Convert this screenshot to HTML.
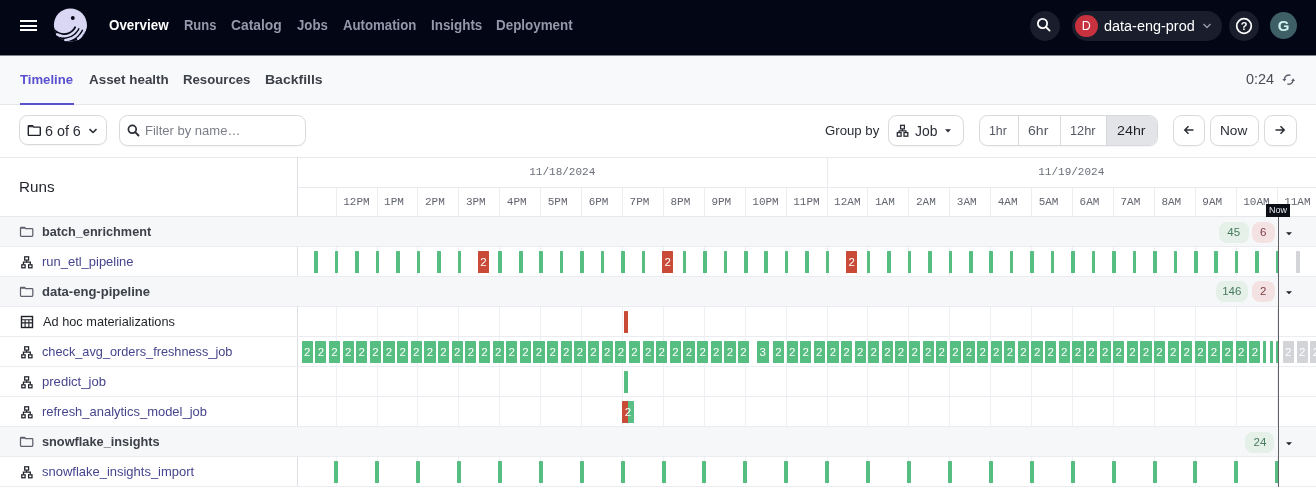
<!DOCTYPE html><html><head><meta charset="utf-8"><style>
*{margin:0;padding:0;box-sizing:border-box}
html,body{width:1316px;height:503px;overflow:hidden;background:#fff;font-family:"Liberation Sans",sans-serif;position:relative}
.a{position:absolute}
.nav{left:0;top:0;width:1316px;height:55px;background:#030615}
.nl{top:-2.5px;height:55px;line-height:55px;font-size:14px;letter-spacing:-0.35px;font-weight:700;color:#9598AA;white-space:nowrap}
.tabs{left:0;top:55px;width:1316px;height:50px;background:#F8F9FB;border-bottom:1px solid #E6E8EC}
.tb{top:55px;height:49px;line-height:49px;font-size:13px;font-weight:700;color:#3D4049;white-space:nowrap}
.btn{border:1px solid #D7D9DD;border-radius:8.5px;background:#fff;box-shadow:0 1px 1px rgba(0,0,0,0.04)}
.t{white-space:nowrap}
.mono{font-family:"Liberation Mono",monospace}
.row{left:0;width:1316px;height:30px;border-bottom:1px solid #EBECEF}
.grp{background:#F6F7F9}
.rn{left:42px;margin-top:-0.5px;height:30px;line-height:30px;font-size:12.75px;white-space:nowrap}
.gn{left:42px;height:30px;line-height:31px;font-size:12.5px;font-weight:700;color:#3D4049;white-space:nowrap}
.g{background:#57BE82}
.r{background:#C94B37}
.gy{background:#D2D4D8}
.bx{color:#fff;font-size:11.5px;text-align:center;line-height:22px;height:22px;border-radius:0.6px}
.pill{height:21px;line-height:21px;border-radius:8px;font-size:11.5px;text-align:center}
</style></head><body><div id="root" class="a" style="left:0;top:0;width:1316px;height:503px;overflow:hidden;will-change:transform;background:#fff"><div class="a nav"></div>
<div class="a" style="left:20px;top:19.5px;width:17px;height:2px;background:#fff"></div>
<div class="a" style="left:20px;top:24.5px;width:17px;height:2px;background:#fff"></div>
<div class="a" style="left:20px;top:29px;width:17px;height:2px;background:#fff"></div>
<svg class="a" style="left:52px;top:7px" width="38" height="38" viewBox="0 0 38 38">
<defs><clipPath id="lc"><circle cx="18.4" cy="18" r="16.5"/></clipPath></defs>
<g clip-path="url(#lc)">
<rect x="0" y="0" width="38" height="38" fill="#D9D7F3"/>
<path d="M35.75 25.08 A26 26 0 1 1 -11.56 3.51" stroke="#030615" stroke-width="28.6" fill="none"/>
<path d="M26.17 18.03 A14.6 14.6 0 0 1 6.53 28.04" stroke="#D9D7F3" stroke-width="2.5" fill="none"/>
<path d="M30.10 18.35 A18.5 18.5 0 0 1 15.21 32.72" stroke="#D9D7F3" stroke-width="2.5" fill="none"/>
<path d="M34.08 17.60 A22.3 22.3 0 0 1 27.77 30.27" stroke="#D9D7F3" stroke-width="2.5" fill="none"/>
</g>
<path d="M9.46 28.88 A14.6 14.6 0 0 1 5.15 27.39" stroke="#D9D7F3" stroke-width="2.5" fill="none" stroke-linecap="round"/>
<path d="M18.33 31.88 A18.5 18.5 0 0 1 13.29 32.95" stroke="#D9D7F3" stroke-width="2.5" fill="none" stroke-linecap="round"/>
<path d="M29.08 28.83 A22.3 22.3 0 0 1 26.03 31.83" stroke="#D9D7F3" stroke-width="2.5" fill="none" stroke-linecap="round"/>
<circle cx="20.8" cy="11" r="1.9" fill="#030615"/>
</svg>
<div class="a t" style="left:109.42px;top:-2.5px;height:55px;line-height:55px;font-size:14px;font-weight:700;transform:scaleX(0.9571);transform-origin:0 0;color:#fff">Overview</div>
<div class="a t" style="left:183.87px;top:-2.5px;height:55px;line-height:55px;font-size:14px;font-weight:700;transform:scaleX(0.9254);transform-origin:0 0;color:#9598AA">Runs</div>
<div class="a t" style="left:231.01px;top:-2.5px;height:55px;line-height:55px;font-size:14px;font-weight:700;transform:scaleX(0.9860);transform-origin:0 0;color:#9598AA">Catalog</div>
<div class="a t" style="left:297.06px;top:-2.5px;height:55px;line-height:55px;font-size:14px;font-weight:700;transform:scaleX(0.9417);transform-origin:0 0;color:#9598AA">Jobs</div>
<div class="a t" style="left:343.36px;top:-2.5px;height:55px;line-height:55px;font-size:14px;font-weight:700;transform:scaleX(0.9433);transform-origin:0 0;color:#9598AA">Automation</div>
<div class="a t" style="left:430.84px;top:-2.5px;height:55px;line-height:55px;font-size:14px;font-weight:700;transform:scaleX(0.9558);transform-origin:0 0;color:#9598AA">Insights</div>
<div class="a t" style="left:496.44px;top:-2.5px;height:55px;line-height:55px;font-size:14px;font-weight:700;transform:scaleX(0.9570);transform-origin:0 0;color:#9598AA">Deployment</div>
<div class="a" style="left:1029.5px;top:11px;width:30px;height:30px;border-radius:50%;background:#1A1D2B"></div>
<svg class="a" style="left:1035.2px;top:16.2px" width="18" height="18" viewBox="0 0 18 18"><circle cx="7.5" cy="7.5" r="4.6" stroke="#fff" stroke-width="1.8" fill="none"/><path d="M11 11 L14.6 14.6" stroke="#fff" stroke-width="1.8" stroke-linecap="round"/></svg>
<div class="a" style="left:1072px;top:11px;width:149.5px;height:30px;border-radius:15px;background:#1A1D2B"></div>
<div class="a" style="left:1075px;top:14.5px;width:22.5px;height:22.5px;border-radius:50%;background:#C8323F;color:#fff;font-size:12.5px;line-height:22.5px;text-align:center">D</div>
<div class="a t" style="left:1104.48px;top:11px;height:30px;line-height:30px;font-size:14px;transform:scaleX(1.0312);transform-origin:0 0;color:#fff">data-eng-prod</div>
<svg class="a" style="left:1202px;top:22px" width="10" height="8" viewBox="0 0 10 8"><path d="M1.5 2 L5 5.5 L8.5 2" stroke="#9A9DAE" stroke-width="1.3" fill="none"/></svg>
<div class="a" style="left:1229px;top:11px;width:30px;height:30px;border-radius:50%;background:#1A1D2B"></div>
<svg class="a" style="left:1235px;top:17px" width="18" height="18" viewBox="0 0 18 18"><circle cx="9" cy="9" r="7.3" stroke="#fff" stroke-width="1.7" fill="none"/><text x="9" y="13" text-anchor="middle" font-family="Liberation Sans" font-weight="700" font-size="11" fill="#fff">?</text></svg>
<div class="a" style="left:1270px;top:11.8px;width:27px;height:27px;border-radius:50%;background:#3D5F65;color:#D4F2F2;font-size:15px;font-weight:700;line-height:27px;text-align:center">G</div>
<div class="a tabs"></div>
<div class="a" style="left:0;top:55px;width:1316px;height:1px;background:#80828C"></div>
<div class="a t" style="left:20.06px;top:55px;height:49px;line-height:49px;font-size:13.5px;font-weight:700;transform:scaleX(0.9730);transform-origin:0 0;color:#5A51CF">Timeline</div>
<div class="a t" style="left:88.55px;top:55px;height:49px;line-height:49px;font-size:13.5px;font-weight:700;transform:scaleX(0.9931);transform-origin:0 0;color:#3D4049">Asset health</div>
<div class="a t" style="left:183.02px;top:55px;height:49px;line-height:49px;font-size:13.5px;font-weight:700;transform:scaleX(0.9763);transform-origin:0 0;color:#3D4049">Resources</div>
<div class="a t" style="left:264.96px;top:55px;height:49px;line-height:49px;font-size:13.5px;font-weight:700;transform:scaleX(1.0370);transform-origin:0 0;color:#3D4049">Backfills</div>
<div class="a" style="left:19.5px;top:102.5px;width:54px;height:2px;background:#5A51CF"></div>
<div class="a t" style="left:1246.08px;top:55px;height:49px;line-height:49px;font-size:14px;transform:scaleX(1.0324);transform-origin:0 0;color:#4A4D57">0:24</div>
<svg class="a" style="left:1280px;top:71px" width="18" height="18" viewBox="0 0 18 18"><path d="M4.4 8.2 A4.5 4.5 0 0 1 10.6 4.4" stroke="#5F626C" stroke-width="1.5" fill="none"/><path d="M7.3 12.9 A4.5 4.5 0 0 0 13.1 9.6" stroke="#5F626C" stroke-width="1.5" fill="none"/><path d="M2.3 8 L6.4 8 L4.3 10.6 Z" fill="#5F626C"/><path d="M11.1 9.9 L15.1 9.9 L13.2 7.2 Z" fill="#5F626C"/></svg>
<div class="a" style="left:0;top:157px;width:1316px;height:1px;background:#E9EAEE"></div>
<div class="a btn" style="left:19.3px;top:115.2px;width:87.7px;height:30.3px"></div>
<svg class="a" style="left:27px;top:124px" width="15" height="14" viewBox="0 0 15 14"><path d="M2 1.8 H5.6 L6.8 3.1 H12.6 Q13.3 3.1 13.3 3.8 V10.7 Q13.3 11.4 12.6 11.4 H2 Q1.3 11.4 1.3 10.7 V2.5 Q1.3 1.8 2 1.8 Z" stroke="#1F2229" stroke-width="1.4" fill="none" stroke-linejoin="round"/><path d="M1.6 2.2 H5.4 L6.4 3.3 H1.6 Z" fill="#1F2229"/></svg>
<div class="a t" style="left:45.23px;top:115.5px;height:30px;line-height:30px;font-size:14px;transform:scaleX(1.0222);transform-origin:0 0;color:#2A2D35">6 of 6</div>
<svg class="a" style="left:87px;top:126px" width="12" height="10" viewBox="0 0 12 10"><path d="M2.5 3.2 L6 6.5 L9.5 3.2" stroke="#2A2D35" stroke-width="1.6" fill="none"/></svg>
<div class="a btn" style="left:119px;top:115.2px;width:187px;height:30.4px"></div>
<svg class="a" style="left:126px;top:123px" width="15" height="15" viewBox="0 0 15 15"><circle cx="6.3" cy="6.3" r="3.9" stroke="#2A2D35" stroke-width="1.7" fill="none"/><path d="M9.2 9.2 L12.5 12.5" stroke="#2A2D35" stroke-width="1.9" stroke-linecap="round"/></svg>
<div class="a t" style="left:144.70px;top:115.5px;height:30px;line-height:30px;font-size:13px;transform:scaleX(1.0005);transform-origin:0 0;color:#7B7E88">Filter by name…</div>
<div class="a t" style="left:825.14px;top:115.5px;height:30px;line-height:30px;font-size:13px;transform:scaleX(1.0142);transform-origin:0 0;color:#2A2D35">Group by</div>
<div class="a btn" style="left:888px;top:115.2px;width:75.5px;height:30.4px"></div>
<svg class="a" style="left:896px;top:124px" width="14" height="14" viewBox="0 0 14 14"><rect x="4.6" y="1.3" width="3.8" height="3.6" stroke="#2A2D35" stroke-width="1.3" fill="none"/><rect x="1.3" y="8.6" width="3.8" height="3.6" stroke="#2A2D35" stroke-width="1.3" fill="none"/><rect x="8" y="8.6" width="3.8" height="3.6" stroke="#2A2D35" stroke-width="1.3" fill="none"/><path d="M6.5 5 V6.8 M3.2 8.6 V6.8 H9.9 V8.6" stroke="#2A2D35" stroke-width="1.3" fill="none"/></svg>
<div class="a t" style="left:914.75px;top:115.5px;height:30px;line-height:30px;font-size:14px;transform:scaleX(0.9931);transform-origin:0 0;color:#2A2D35">Job</div>
<svg class="a" style="left:944px;top:128px" width="8" height="6" viewBox="0 0 8 6"><path d="M1 1.2 H7 L4 4.6 Z" fill="#2A2D35"/></svg>
<div class="a btn" style="left:978.5px;top:115.2px;width:179px;height:30.4px;overflow:hidden"><div class="a" style="left:127px;top:0;width:52px;height:30px;background:#E3E4E8"></div><div class="a" style="left:38px;top:0;width:1px;height:30px;background:#D7D9DD"></div><div class="a" style="left:80.5px;top:0;width:1px;height:30px;background:#D7D9DD"></div><div class="a" style="left:126.5px;top:0;width:1px;height:30px;background:#D7D9DD"></div></div>
<div class="a t" style="left:988.88px;top:115.5px;height:30px;line-height:30px;font-size:13.5px;transform:scaleX(0.9151);transform-origin:0 0;color:#555964">1hr</div>
<div class="a t" style="left:1028.22px;top:115.5px;height:30px;line-height:30px;font-size:13.5px;transform:scaleX(1.0432);transform-origin:0 0;color:#555964">6hr</div>
<div class="a t" style="left:1070.05px;top:115.5px;height:30px;line-height:30px;font-size:13.5px;transform:scaleX(0.9476);transform-origin:0 0;color:#555964">12hr</div>
<div class="a t" style="left:1117.21px;top:115.5px;height:30px;line-height:30px;font-size:13.5px;transform:scaleX(1.0577);transform-origin:0 0;color:#1F2229">24hr</div>
<div class="a btn" style="left:1173px;top:115.2px;width:32px;height:30.4px"></div>
<svg class="a" style="left:1182px;top:123px" width="14" height="14" viewBox="0 0 14 14"><path d="M11.5 7 H3 M6.5 3.3 L2.8 7 L6.5 10.7" stroke="#2A2D35" stroke-width="1.5" fill="none"/></svg>
<div class="a btn" style="left:1209.5px;top:115.2px;width:49.5px;height:30.4px"></div>
<div class="a t" style="left:1220.39px;top:115.5px;height:30px;line-height:30px;font-size:13.5px;transform:scaleX(1.0115);transform-origin:0 0;color:#2A2D35">Now</div>
<div class="a btn" style="left:1263.5px;top:115.2px;width:33px;height:30.4px"></div>
<svg class="a" style="left:1273px;top:123px" width="14" height="14" viewBox="0 0 14 14"><path d="M2.5 7 H11 M7.5 3.3 L11.2 7 L7.5 10.7" stroke="#2A2D35" stroke-width="1.5" fill="none"/></svg>
<div class="a t" style="left:18.93px;top:157px;height:59px;line-height:59px;font-size:15px;transform:scaleX(1.0165);transform-origin:0 0;color:#1F2229">Runs</div>
<div class="a" style="left:297px;top:157px;width:1px;height:59px;background:#DDDFE2"></div>
<div class="a" style="left:298px;top:187px;width:1018px;height:1px;background:#E9EAEE"></div>
<div class="a" style="left:0;top:216px;width:1316px;height:1px;background:#E6E7EB"></div>
<div class="a" style="left:826.52px;top:157px;width:1px;height:30px;background:#E9EAEE"></div>
<div class="a t mono" style="left:298px;width:528.5px;top:157px;height:30px;line-height:30px;font-size:11px;color:#6B6E78;text-align:center">11/18/2024</div>
<div class="a t mono" style="left:826.52px;width:489.48px;top:157px;height:30px;line-height:30px;font-size:11px;color:#6B6E78;text-align:center">11/19/2024</div>
<div class="a" style="left:335.60px;top:187px;width:1px;height:29px;background:#ECEDF0"></div>
<div class="a t mono" style="left:343.20px;top:188px;height:29px;line-height:29px;font-size:11px;color:#62656F">12PM</div>
<div class="a" style="left:376.51px;top:187px;width:1px;height:29px;background:#ECEDF0"></div>
<div class="a t mono" style="left:384.11px;top:188px;height:29px;line-height:29px;font-size:11px;color:#62656F">1PM</div>
<div class="a" style="left:417.42px;top:187px;width:1px;height:29px;background:#ECEDF0"></div>
<div class="a t mono" style="left:425.02px;top:188px;height:29px;line-height:29px;font-size:11px;color:#62656F">2PM</div>
<div class="a" style="left:458.33px;top:187px;width:1px;height:29px;background:#ECEDF0"></div>
<div class="a t mono" style="left:465.93px;top:188px;height:29px;line-height:29px;font-size:11px;color:#62656F">3PM</div>
<div class="a" style="left:499.24px;top:187px;width:1px;height:29px;background:#ECEDF0"></div>
<div class="a t mono" style="left:506.84px;top:188px;height:29px;line-height:29px;font-size:11px;color:#62656F">4PM</div>
<div class="a" style="left:540.15px;top:187px;width:1px;height:29px;background:#ECEDF0"></div>
<div class="a t mono" style="left:547.75px;top:188px;height:29px;line-height:29px;font-size:11px;color:#62656F">5PM</div>
<div class="a" style="left:581.06px;top:187px;width:1px;height:29px;background:#ECEDF0"></div>
<div class="a t mono" style="left:588.66px;top:188px;height:29px;line-height:29px;font-size:11px;color:#62656F">6PM</div>
<div class="a" style="left:621.97px;top:187px;width:1px;height:29px;background:#ECEDF0"></div>
<div class="a t mono" style="left:629.57px;top:188px;height:29px;line-height:29px;font-size:11px;color:#62656F">7PM</div>
<div class="a" style="left:662.88px;top:187px;width:1px;height:29px;background:#ECEDF0"></div>
<div class="a t mono" style="left:670.48px;top:188px;height:29px;line-height:29px;font-size:11px;color:#62656F">8PM</div>
<div class="a" style="left:703.79px;top:187px;width:1px;height:29px;background:#ECEDF0"></div>
<div class="a t mono" style="left:711.39px;top:188px;height:29px;line-height:29px;font-size:11px;color:#62656F">9PM</div>
<div class="a" style="left:744.70px;top:187px;width:1px;height:29px;background:#ECEDF0"></div>
<div class="a t mono" style="left:752.30px;top:188px;height:29px;line-height:29px;font-size:11px;color:#62656F">10PM</div>
<div class="a" style="left:785.61px;top:187px;width:1px;height:29px;background:#ECEDF0"></div>
<div class="a t mono" style="left:793.21px;top:188px;height:29px;line-height:29px;font-size:11px;color:#62656F">11PM</div>
<div class="a" style="left:826.52px;top:187px;width:1px;height:29px;background:#ECEDF0"></div>
<div class="a t mono" style="left:834.12px;top:188px;height:29px;line-height:29px;font-size:11px;color:#62656F">12AM</div>
<div class="a" style="left:867.43px;top:187px;width:1px;height:29px;background:#ECEDF0"></div>
<div class="a t mono" style="left:875.03px;top:188px;height:29px;line-height:29px;font-size:11px;color:#62656F">1AM</div>
<div class="a" style="left:908.34px;top:187px;width:1px;height:29px;background:#ECEDF0"></div>
<div class="a t mono" style="left:915.94px;top:188px;height:29px;line-height:29px;font-size:11px;color:#62656F">2AM</div>
<div class="a" style="left:949.25px;top:187px;width:1px;height:29px;background:#ECEDF0"></div>
<div class="a t mono" style="left:956.85px;top:188px;height:29px;line-height:29px;font-size:11px;color:#62656F">3AM</div>
<div class="a" style="left:990.16px;top:187px;width:1px;height:29px;background:#ECEDF0"></div>
<div class="a t mono" style="left:997.76px;top:188px;height:29px;line-height:29px;font-size:11px;color:#62656F">4AM</div>
<div class="a" style="left:1031.07px;top:187px;width:1px;height:29px;background:#ECEDF0"></div>
<div class="a t mono" style="left:1038.67px;top:188px;height:29px;line-height:29px;font-size:11px;color:#62656F">5AM</div>
<div class="a" style="left:1071.98px;top:187px;width:1px;height:29px;background:#ECEDF0"></div>
<div class="a t mono" style="left:1079.58px;top:188px;height:29px;line-height:29px;font-size:11px;color:#62656F">6AM</div>
<div class="a" style="left:1112.89px;top:187px;width:1px;height:29px;background:#ECEDF0"></div>
<div class="a t mono" style="left:1120.49px;top:188px;height:29px;line-height:29px;font-size:11px;color:#62656F">7AM</div>
<div class="a" style="left:1153.80px;top:187px;width:1px;height:29px;background:#ECEDF0"></div>
<div class="a t mono" style="left:1161.40px;top:188px;height:29px;line-height:29px;font-size:11px;color:#62656F">8AM</div>
<div class="a" style="left:1194.71px;top:187px;width:1px;height:29px;background:#ECEDF0"></div>
<div class="a t mono" style="left:1202.31px;top:188px;height:29px;line-height:29px;font-size:11px;color:#62656F">9AM</div>
<div class="a" style="left:1235.62px;top:187px;width:1px;height:29px;background:#ECEDF0"></div>
<div class="a t mono" style="left:1243.22px;top:188px;height:29px;line-height:29px;font-size:11px;color:#62656F">10AM</div>
<div class="a" style="left:1276.53px;top:187px;width:1px;height:29px;background:#ECEDF0"></div>
<div class="a t mono" style="left:1284.13px;top:188px;height:29px;line-height:29px;font-size:11px;color:#62656F">11AM</div>
<div class="a row grp" style="top:217px"></div>
<svg class="a" style="left:19px;top:225.8px" width="16" height="13" viewBox="0 0 16 13"><path d="M2.2 1.4 H5.6 L6.6 2.5 H13.1 Q13.8 2.5 13.8 3.2 V9.6 Q13.8 10.3 13.1 10.3 H2.2 Q1.5 10.3 1.5 9.6 V2.1 Q1.5 1.4 2.2 1.4 Z" stroke="#5E616C" stroke-width="1.25" fill="none" stroke-linejoin="round"/><path d="M1.8 1.8 H5.4 L6.3 2.8 H1.8 Z" fill="#5E616C"/></svg>
<div class="a t" style="left:41.84px;top:216.5px;height:30px;line-height:30px;font-size:12.5px;font-weight:700;transform:scaleX(1.0136);transform-origin:0 0;color:#3D4049">batch_enrichment</div>
<div class="a row" style="top:247px"></div>
<div class="a" style="left:297px;top:247px;width:1px;height:29px;background:#DDDFE2"></div>
<div class="a" style="left:335.60px;top:247px;width:1px;height:30px;background:#EEEFF2"></div>
<div class="a" style="left:376.51px;top:247px;width:1px;height:30px;background:#EEEFF2"></div>
<div class="a" style="left:417.42px;top:247px;width:1px;height:30px;background:#EEEFF2"></div>
<div class="a" style="left:458.33px;top:247px;width:1px;height:30px;background:#EEEFF2"></div>
<div class="a" style="left:499.24px;top:247px;width:1px;height:30px;background:#EEEFF2"></div>
<div class="a" style="left:540.15px;top:247px;width:1px;height:30px;background:#EEEFF2"></div>
<div class="a" style="left:581.06px;top:247px;width:1px;height:30px;background:#EEEFF2"></div>
<div class="a" style="left:621.97px;top:247px;width:1px;height:30px;background:#EEEFF2"></div>
<div class="a" style="left:662.88px;top:247px;width:1px;height:30px;background:#EEEFF2"></div>
<div class="a" style="left:703.79px;top:247px;width:1px;height:30px;background:#EEEFF2"></div>
<div class="a" style="left:744.70px;top:247px;width:1px;height:30px;background:#EEEFF2"></div>
<div class="a" style="left:785.61px;top:247px;width:1px;height:30px;background:#EEEFF2"></div>
<div class="a" style="left:826.52px;top:247px;width:1px;height:30px;background:#EEEFF2"></div>
<div class="a" style="left:867.43px;top:247px;width:1px;height:30px;background:#EEEFF2"></div>
<div class="a" style="left:908.34px;top:247px;width:1px;height:30px;background:#EEEFF2"></div>
<div class="a" style="left:949.25px;top:247px;width:1px;height:30px;background:#EEEFF2"></div>
<div class="a" style="left:990.16px;top:247px;width:1px;height:30px;background:#EEEFF2"></div>
<div class="a" style="left:1031.07px;top:247px;width:1px;height:30px;background:#EEEFF2"></div>
<div class="a" style="left:1071.98px;top:247px;width:1px;height:30px;background:#EEEFF2"></div>
<div class="a" style="left:1112.89px;top:247px;width:1px;height:30px;background:#EEEFF2"></div>
<div class="a" style="left:1153.80px;top:247px;width:1px;height:30px;background:#EEEFF2"></div>
<div class="a" style="left:1194.71px;top:247px;width:1px;height:30px;background:#EEEFF2"></div>
<div class="a" style="left:1235.62px;top:247px;width:1px;height:30px;background:#EEEFF2"></div>
<div class="a" style="left:1276.53px;top:247px;width:1px;height:30px;background:#EEEFF2"></div>
<svg class="a" style="left:20px;top:255.5px" width="14" height="14" viewBox="0 0 14 14"><rect x="4.7" y="0.8" width="3.9" height="3.3" stroke="#1F2229" stroke-width="1.25" fill="none"/><rect x="1.8" y="8.8" width="3.3" height="3.0" stroke="#1F2229" stroke-width="1.25" fill="none"/><rect x="8.6" y="8.8" width="3.4" height="3.0" stroke="#1F2229" stroke-width="1.25" fill="none"/><path d="M6.65 4.4 V6.2 M3.45 8.2 V6.2 H10.3 V8.2" stroke="#1F2229" stroke-width="1.25" fill="none"/></svg>
<div class="a t" style="left:41.74px;top:246.5px;height:30px;line-height:30px;font-size:12.75px;transform:scaleX(1.0163);transform-origin:0 0;color:#46448C">run_etl_pipeline</div>
<div class="a row grp" style="top:277px"></div>
<svg class="a" style="left:19px;top:285.8px" width="16" height="13" viewBox="0 0 16 13"><path d="M2.2 1.4 H5.6 L6.6 2.5 H13.1 Q13.8 2.5 13.8 3.2 V9.6 Q13.8 10.3 13.1 10.3 H2.2 Q1.5 10.3 1.5 9.6 V2.1 Q1.5 1.4 2.2 1.4 Z" stroke="#5E616C" stroke-width="1.25" fill="none" stroke-linejoin="round"/><path d="M1.8 1.8 H5.4 L6.3 2.8 H1.8 Z" fill="#5E616C"/></svg>
<div class="a t" style="left:42.08px;top:276.5px;height:30px;line-height:30px;font-size:12.5px;font-weight:700;transform:scaleX(1.0439);transform-origin:0 0;color:#3D4049">data-eng-pipeline</div>
<div class="a row" style="top:307px"></div>
<div class="a" style="left:297px;top:307px;width:1px;height:29px;background:#DDDFE2"></div>
<div class="a" style="left:335.60px;top:307px;width:1px;height:30px;background:#EEEFF2"></div>
<div class="a" style="left:376.51px;top:307px;width:1px;height:30px;background:#EEEFF2"></div>
<div class="a" style="left:417.42px;top:307px;width:1px;height:30px;background:#EEEFF2"></div>
<div class="a" style="left:458.33px;top:307px;width:1px;height:30px;background:#EEEFF2"></div>
<div class="a" style="left:499.24px;top:307px;width:1px;height:30px;background:#EEEFF2"></div>
<div class="a" style="left:540.15px;top:307px;width:1px;height:30px;background:#EEEFF2"></div>
<div class="a" style="left:581.06px;top:307px;width:1px;height:30px;background:#EEEFF2"></div>
<div class="a" style="left:621.97px;top:307px;width:1px;height:30px;background:#EEEFF2"></div>
<div class="a" style="left:662.88px;top:307px;width:1px;height:30px;background:#EEEFF2"></div>
<div class="a" style="left:703.79px;top:307px;width:1px;height:30px;background:#EEEFF2"></div>
<div class="a" style="left:744.70px;top:307px;width:1px;height:30px;background:#EEEFF2"></div>
<div class="a" style="left:785.61px;top:307px;width:1px;height:30px;background:#EEEFF2"></div>
<div class="a" style="left:826.52px;top:307px;width:1px;height:30px;background:#EEEFF2"></div>
<div class="a" style="left:867.43px;top:307px;width:1px;height:30px;background:#EEEFF2"></div>
<div class="a" style="left:908.34px;top:307px;width:1px;height:30px;background:#EEEFF2"></div>
<div class="a" style="left:949.25px;top:307px;width:1px;height:30px;background:#EEEFF2"></div>
<div class="a" style="left:990.16px;top:307px;width:1px;height:30px;background:#EEEFF2"></div>
<div class="a" style="left:1031.07px;top:307px;width:1px;height:30px;background:#EEEFF2"></div>
<div class="a" style="left:1071.98px;top:307px;width:1px;height:30px;background:#EEEFF2"></div>
<div class="a" style="left:1112.89px;top:307px;width:1px;height:30px;background:#EEEFF2"></div>
<div class="a" style="left:1153.80px;top:307px;width:1px;height:30px;background:#EEEFF2"></div>
<div class="a" style="left:1194.71px;top:307px;width:1px;height:30px;background:#EEEFF2"></div>
<div class="a" style="left:1235.62px;top:307px;width:1px;height:30px;background:#EEEFF2"></div>
<div class="a" style="left:1276.53px;top:307px;width:1px;height:30px;background:#EEEFF2"></div>
<svg class="a" style="left:20px;top:315px" width="14" height="14" viewBox="0 0 14 14"><rect x="1.5" y="1.5" width="11" height="11" stroke="#1F2229" stroke-width="1.4" fill="none"/><path d="M1.5 4.8 H12.5 M1.5 7.9 H12.5 M5.1 4.8 V12.5 M8.9 4.8 V12.5" stroke="#1F2229" stroke-width="1.1"/></svg>
<div class="a t" style="left:42.50px;top:306.5px;height:30px;line-height:30px;font-size:12.75px;transform:scaleX(1.0004);transform-origin:0 0;color:#1F2229">Ad hoc materializations</div>
<div class="a row" style="top:337px"></div>
<div class="a" style="left:297px;top:337px;width:1px;height:29px;background:#DDDFE2"></div>
<div class="a" style="left:335.60px;top:337px;width:1px;height:30px;background:#EEEFF2"></div>
<div class="a" style="left:376.51px;top:337px;width:1px;height:30px;background:#EEEFF2"></div>
<div class="a" style="left:417.42px;top:337px;width:1px;height:30px;background:#EEEFF2"></div>
<div class="a" style="left:458.33px;top:337px;width:1px;height:30px;background:#EEEFF2"></div>
<div class="a" style="left:499.24px;top:337px;width:1px;height:30px;background:#EEEFF2"></div>
<div class="a" style="left:540.15px;top:337px;width:1px;height:30px;background:#EEEFF2"></div>
<div class="a" style="left:581.06px;top:337px;width:1px;height:30px;background:#EEEFF2"></div>
<div class="a" style="left:621.97px;top:337px;width:1px;height:30px;background:#EEEFF2"></div>
<div class="a" style="left:662.88px;top:337px;width:1px;height:30px;background:#EEEFF2"></div>
<div class="a" style="left:703.79px;top:337px;width:1px;height:30px;background:#EEEFF2"></div>
<div class="a" style="left:744.70px;top:337px;width:1px;height:30px;background:#EEEFF2"></div>
<div class="a" style="left:785.61px;top:337px;width:1px;height:30px;background:#EEEFF2"></div>
<div class="a" style="left:826.52px;top:337px;width:1px;height:30px;background:#EEEFF2"></div>
<div class="a" style="left:867.43px;top:337px;width:1px;height:30px;background:#EEEFF2"></div>
<div class="a" style="left:908.34px;top:337px;width:1px;height:30px;background:#EEEFF2"></div>
<div class="a" style="left:949.25px;top:337px;width:1px;height:30px;background:#EEEFF2"></div>
<div class="a" style="left:990.16px;top:337px;width:1px;height:30px;background:#EEEFF2"></div>
<div class="a" style="left:1031.07px;top:337px;width:1px;height:30px;background:#EEEFF2"></div>
<div class="a" style="left:1071.98px;top:337px;width:1px;height:30px;background:#EEEFF2"></div>
<div class="a" style="left:1112.89px;top:337px;width:1px;height:30px;background:#EEEFF2"></div>
<div class="a" style="left:1153.80px;top:337px;width:1px;height:30px;background:#EEEFF2"></div>
<div class="a" style="left:1194.71px;top:337px;width:1px;height:30px;background:#EEEFF2"></div>
<div class="a" style="left:1235.62px;top:337px;width:1px;height:30px;background:#EEEFF2"></div>
<div class="a" style="left:1276.53px;top:337px;width:1px;height:30px;background:#EEEFF2"></div>
<svg class="a" style="left:20px;top:345.5px" width="14" height="14" viewBox="0 0 14 14"><rect x="4.7" y="0.8" width="3.9" height="3.3" stroke="#1F2229" stroke-width="1.25" fill="none"/><rect x="1.8" y="8.8" width="3.3" height="3.0" stroke="#1F2229" stroke-width="1.25" fill="none"/><rect x="8.6" y="8.8" width="3.4" height="3.0" stroke="#1F2229" stroke-width="1.25" fill="none"/><path d="M6.65 4.4 V6.2 M3.45 8.2 V6.2 H10.3 V8.2" stroke="#1F2229" stroke-width="1.25" fill="none"/></svg>
<div class="a t" style="left:42.00px;top:336.5px;height:30px;line-height:30px;font-size:12.75px;transform:scaleX(0.9987);transform-origin:0 0;color:#46448C">check_avg_orders_freshness_job</div>
<div class="a row" style="top:367px"></div>
<div class="a" style="left:297px;top:367px;width:1px;height:29px;background:#DDDFE2"></div>
<div class="a" style="left:335.60px;top:367px;width:1px;height:30px;background:#EEEFF2"></div>
<div class="a" style="left:376.51px;top:367px;width:1px;height:30px;background:#EEEFF2"></div>
<div class="a" style="left:417.42px;top:367px;width:1px;height:30px;background:#EEEFF2"></div>
<div class="a" style="left:458.33px;top:367px;width:1px;height:30px;background:#EEEFF2"></div>
<div class="a" style="left:499.24px;top:367px;width:1px;height:30px;background:#EEEFF2"></div>
<div class="a" style="left:540.15px;top:367px;width:1px;height:30px;background:#EEEFF2"></div>
<div class="a" style="left:581.06px;top:367px;width:1px;height:30px;background:#EEEFF2"></div>
<div class="a" style="left:621.97px;top:367px;width:1px;height:30px;background:#EEEFF2"></div>
<div class="a" style="left:662.88px;top:367px;width:1px;height:30px;background:#EEEFF2"></div>
<div class="a" style="left:703.79px;top:367px;width:1px;height:30px;background:#EEEFF2"></div>
<div class="a" style="left:744.70px;top:367px;width:1px;height:30px;background:#EEEFF2"></div>
<div class="a" style="left:785.61px;top:367px;width:1px;height:30px;background:#EEEFF2"></div>
<div class="a" style="left:826.52px;top:367px;width:1px;height:30px;background:#EEEFF2"></div>
<div class="a" style="left:867.43px;top:367px;width:1px;height:30px;background:#EEEFF2"></div>
<div class="a" style="left:908.34px;top:367px;width:1px;height:30px;background:#EEEFF2"></div>
<div class="a" style="left:949.25px;top:367px;width:1px;height:30px;background:#EEEFF2"></div>
<div class="a" style="left:990.16px;top:367px;width:1px;height:30px;background:#EEEFF2"></div>
<div class="a" style="left:1031.07px;top:367px;width:1px;height:30px;background:#EEEFF2"></div>
<div class="a" style="left:1071.98px;top:367px;width:1px;height:30px;background:#EEEFF2"></div>
<div class="a" style="left:1112.89px;top:367px;width:1px;height:30px;background:#EEEFF2"></div>
<div class="a" style="left:1153.80px;top:367px;width:1px;height:30px;background:#EEEFF2"></div>
<div class="a" style="left:1194.71px;top:367px;width:1px;height:30px;background:#EEEFF2"></div>
<div class="a" style="left:1235.62px;top:367px;width:1px;height:30px;background:#EEEFF2"></div>
<div class="a" style="left:1276.53px;top:367px;width:1px;height:30px;background:#EEEFF2"></div>
<svg class="a" style="left:20px;top:375.5px" width="14" height="14" viewBox="0 0 14 14"><rect x="4.7" y="0.8" width="3.9" height="3.3" stroke="#1F2229" stroke-width="1.25" fill="none"/><rect x="1.8" y="8.8" width="3.3" height="3.0" stroke="#1F2229" stroke-width="1.25" fill="none"/><rect x="8.6" y="8.8" width="3.4" height="3.0" stroke="#1F2229" stroke-width="1.25" fill="none"/><path d="M6.65 4.4 V6.2 M3.45 8.2 V6.2 H10.3 V8.2" stroke="#1F2229" stroke-width="1.25" fill="none"/></svg>
<div class="a t" style="left:41.73px;top:366.5px;height:30px;line-height:30px;font-size:12.75px;transform:scaleX(1.0253);transform-origin:0 0;color:#46448C">predict_job</div>
<div class="a row" style="top:397px"></div>
<div class="a" style="left:297px;top:397px;width:1px;height:29px;background:#DDDFE2"></div>
<div class="a" style="left:335.60px;top:397px;width:1px;height:30px;background:#EEEFF2"></div>
<div class="a" style="left:376.51px;top:397px;width:1px;height:30px;background:#EEEFF2"></div>
<div class="a" style="left:417.42px;top:397px;width:1px;height:30px;background:#EEEFF2"></div>
<div class="a" style="left:458.33px;top:397px;width:1px;height:30px;background:#EEEFF2"></div>
<div class="a" style="left:499.24px;top:397px;width:1px;height:30px;background:#EEEFF2"></div>
<div class="a" style="left:540.15px;top:397px;width:1px;height:30px;background:#EEEFF2"></div>
<div class="a" style="left:581.06px;top:397px;width:1px;height:30px;background:#EEEFF2"></div>
<div class="a" style="left:621.97px;top:397px;width:1px;height:30px;background:#EEEFF2"></div>
<div class="a" style="left:662.88px;top:397px;width:1px;height:30px;background:#EEEFF2"></div>
<div class="a" style="left:703.79px;top:397px;width:1px;height:30px;background:#EEEFF2"></div>
<div class="a" style="left:744.70px;top:397px;width:1px;height:30px;background:#EEEFF2"></div>
<div class="a" style="left:785.61px;top:397px;width:1px;height:30px;background:#EEEFF2"></div>
<div class="a" style="left:826.52px;top:397px;width:1px;height:30px;background:#EEEFF2"></div>
<div class="a" style="left:867.43px;top:397px;width:1px;height:30px;background:#EEEFF2"></div>
<div class="a" style="left:908.34px;top:397px;width:1px;height:30px;background:#EEEFF2"></div>
<div class="a" style="left:949.25px;top:397px;width:1px;height:30px;background:#EEEFF2"></div>
<div class="a" style="left:990.16px;top:397px;width:1px;height:30px;background:#EEEFF2"></div>
<div class="a" style="left:1031.07px;top:397px;width:1px;height:30px;background:#EEEFF2"></div>
<div class="a" style="left:1071.98px;top:397px;width:1px;height:30px;background:#EEEFF2"></div>
<div class="a" style="left:1112.89px;top:397px;width:1px;height:30px;background:#EEEFF2"></div>
<div class="a" style="left:1153.80px;top:397px;width:1px;height:30px;background:#EEEFF2"></div>
<div class="a" style="left:1194.71px;top:397px;width:1px;height:30px;background:#EEEFF2"></div>
<div class="a" style="left:1235.62px;top:397px;width:1px;height:30px;background:#EEEFF2"></div>
<div class="a" style="left:1276.53px;top:397px;width:1px;height:30px;background:#EEEFF2"></div>
<svg class="a" style="left:20px;top:405.5px" width="14" height="14" viewBox="0 0 14 14"><rect x="4.7" y="0.8" width="3.9" height="3.3" stroke="#1F2229" stroke-width="1.25" fill="none"/><rect x="1.8" y="8.8" width="3.3" height="3.0" stroke="#1F2229" stroke-width="1.25" fill="none"/><rect x="8.6" y="8.8" width="3.4" height="3.0" stroke="#1F2229" stroke-width="1.25" fill="none"/><path d="M6.65 4.4 V6.2 M3.45 8.2 V6.2 H10.3 V8.2" stroke="#1F2229" stroke-width="1.25" fill="none"/></svg>
<div class="a t" style="left:41.74px;top:396.5px;height:30px;line-height:30px;font-size:12.75px;transform:scaleX(1.0161);transform-origin:0 0;color:#46448C">refresh_analytics_model_job</div>
<div class="a row grp" style="top:427px"></div>
<svg class="a" style="left:19px;top:435.8px" width="16" height="13" viewBox="0 0 16 13"><path d="M2.2 1.4 H5.6 L6.6 2.5 H13.1 Q13.8 2.5 13.8 3.2 V9.6 Q13.8 10.3 13.1 10.3 H2.2 Q1.5 10.3 1.5 9.6 V2.1 Q1.5 1.4 2.2 1.4 Z" stroke="#5E616C" stroke-width="1.25" fill="none" stroke-linejoin="round"/><path d="M1.8 1.8 H5.4 L6.3 2.8 H1.8 Z" fill="#5E616C"/></svg>
<div class="a t" style="left:42.09px;top:426.5px;height:30px;line-height:30px;font-size:12.5px;font-weight:700;transform:scaleX(1.0197);transform-origin:0 0;color:#3D4049">snowflake_insights</div>
<div class="a row" style="top:457px"></div>
<div class="a" style="left:297px;top:457px;width:1px;height:29px;background:#DDDFE2"></div>
<div class="a" style="left:335.60px;top:457px;width:1px;height:30px;background:#EEEFF2"></div>
<div class="a" style="left:376.51px;top:457px;width:1px;height:30px;background:#EEEFF2"></div>
<div class="a" style="left:417.42px;top:457px;width:1px;height:30px;background:#EEEFF2"></div>
<div class="a" style="left:458.33px;top:457px;width:1px;height:30px;background:#EEEFF2"></div>
<div class="a" style="left:499.24px;top:457px;width:1px;height:30px;background:#EEEFF2"></div>
<div class="a" style="left:540.15px;top:457px;width:1px;height:30px;background:#EEEFF2"></div>
<div class="a" style="left:581.06px;top:457px;width:1px;height:30px;background:#EEEFF2"></div>
<div class="a" style="left:621.97px;top:457px;width:1px;height:30px;background:#EEEFF2"></div>
<div class="a" style="left:662.88px;top:457px;width:1px;height:30px;background:#EEEFF2"></div>
<div class="a" style="left:703.79px;top:457px;width:1px;height:30px;background:#EEEFF2"></div>
<div class="a" style="left:744.70px;top:457px;width:1px;height:30px;background:#EEEFF2"></div>
<div class="a" style="left:785.61px;top:457px;width:1px;height:30px;background:#EEEFF2"></div>
<div class="a" style="left:826.52px;top:457px;width:1px;height:30px;background:#EEEFF2"></div>
<div class="a" style="left:867.43px;top:457px;width:1px;height:30px;background:#EEEFF2"></div>
<div class="a" style="left:908.34px;top:457px;width:1px;height:30px;background:#EEEFF2"></div>
<div class="a" style="left:949.25px;top:457px;width:1px;height:30px;background:#EEEFF2"></div>
<div class="a" style="left:990.16px;top:457px;width:1px;height:30px;background:#EEEFF2"></div>
<div class="a" style="left:1031.07px;top:457px;width:1px;height:30px;background:#EEEFF2"></div>
<div class="a" style="left:1071.98px;top:457px;width:1px;height:30px;background:#EEEFF2"></div>
<div class="a" style="left:1112.89px;top:457px;width:1px;height:30px;background:#EEEFF2"></div>
<div class="a" style="left:1153.80px;top:457px;width:1px;height:30px;background:#EEEFF2"></div>
<div class="a" style="left:1194.71px;top:457px;width:1px;height:30px;background:#EEEFF2"></div>
<div class="a" style="left:1235.62px;top:457px;width:1px;height:30px;background:#EEEFF2"></div>
<div class="a" style="left:1276.53px;top:457px;width:1px;height:30px;background:#EEEFF2"></div>
<svg class="a" style="left:20px;top:465.5px" width="14" height="14" viewBox="0 0 14 14"><rect x="4.7" y="0.8" width="3.9" height="3.3" stroke="#1F2229" stroke-width="1.25" fill="none"/><rect x="1.8" y="8.8" width="3.3" height="3.0" stroke="#1F2229" stroke-width="1.25" fill="none"/><rect x="8.6" y="8.8" width="3.4" height="3.0" stroke="#1F2229" stroke-width="1.25" fill="none"/><path d="M6.65 4.4 V6.2 M3.45 8.2 V6.2 H10.3 V8.2" stroke="#1F2229" stroke-width="1.25" fill="none"/></svg>
<div class="a t" style="left:41.99px;top:456.5px;height:30px;line-height:30px;font-size:12.75px;transform:scaleX(1.0174);transform-origin:0 0;color:#46448C">snowflake_insights_import</div>
<div class="a g bx" style="left:314.40px;top:251px;width:3.60px"></div>
<div class="a g bx" style="left:334.85px;top:251px;width:3.60px"></div>
<div class="a g bx" style="left:355.31px;top:251px;width:3.60px"></div>
<div class="a g bx" style="left:375.76px;top:251px;width:3.60px"></div>
<div class="a g bx" style="left:396.22px;top:251px;width:3.60px"></div>
<div class="a g bx" style="left:416.67px;top:251px;width:3.60px"></div>
<div class="a g bx" style="left:437.13px;top:251px;width:3.60px"></div>
<div class="a g bx" style="left:457.58px;top:251px;width:3.60px"></div>
<div class="a r bx" style="left:478.04px;top:251px;width:11.00px">2</div>
<div class="a g bx" style="left:498.49px;top:251px;width:3.60px"></div>
<div class="a g bx" style="left:518.95px;top:251px;width:3.60px"></div>
<div class="a g bx" style="left:539.40px;top:251px;width:3.60px"></div>
<div class="a g bx" style="left:559.86px;top:251px;width:3.60px"></div>
<div class="a g bx" style="left:580.32px;top:251px;width:3.60px"></div>
<div class="a g bx" style="left:600.77px;top:251px;width:3.60px"></div>
<div class="a g bx" style="left:621.23px;top:251px;width:3.60px"></div>
<div class="a g bx" style="left:641.68px;top:251px;width:3.60px"></div>
<div class="a r bx" style="left:662.13px;top:251px;width:11.00px">2</div>
<div class="a g bx" style="left:682.59px;top:251px;width:3.60px"></div>
<div class="a g bx" style="left:703.05px;top:251px;width:3.60px"></div>
<div class="a g bx" style="left:723.50px;top:251px;width:3.60px"></div>
<div class="a g bx" style="left:743.95px;top:251px;width:3.60px"></div>
<div class="a g bx" style="left:764.41px;top:251px;width:3.60px"></div>
<div class="a g bx" style="left:784.87px;top:251px;width:3.60px"></div>
<div class="a g bx" style="left:805.32px;top:251px;width:3.60px"></div>
<div class="a g bx" style="left:825.77px;top:251px;width:3.60px"></div>
<div class="a r bx" style="left:846.23px;top:251px;width:11.00px">2</div>
<div class="a g bx" style="left:866.68px;top:251px;width:3.60px"></div>
<div class="a g bx" style="left:887.14px;top:251px;width:3.60px"></div>
<div class="a g bx" style="left:907.60px;top:251px;width:3.60px"></div>
<div class="a g bx" style="left:928.05px;top:251px;width:3.60px"></div>
<div class="a g bx" style="left:948.50px;top:251px;width:3.60px"></div>
<div class="a g bx" style="left:968.96px;top:251px;width:3.60px"></div>
<div class="a g bx" style="left:989.41px;top:251px;width:3.60px"></div>
<div class="a g bx" style="left:1009.87px;top:251px;width:3.60px"></div>
<div class="a g bx" style="left:1030.33px;top:251px;width:3.60px"></div>
<div class="a g bx" style="left:1050.78px;top:251px;width:3.60px"></div>
<div class="a g bx" style="left:1071.23px;top:251px;width:3.60px"></div>
<div class="a g bx" style="left:1091.69px;top:251px;width:3.60px"></div>
<div class="a g bx" style="left:1112.14px;top:251px;width:3.60px"></div>
<div class="a g bx" style="left:1132.60px;top:251px;width:3.60px"></div>
<div class="a g bx" style="left:1153.06px;top:251px;width:3.60px"></div>
<div class="a g bx" style="left:1173.51px;top:251px;width:3.60px"></div>
<div class="a g bx" style="left:1193.96px;top:251px;width:3.60px"></div>
<div class="a g bx" style="left:1214.42px;top:251px;width:3.60px"></div>
<div class="a g bx" style="left:1234.88px;top:251px;width:3.60px"></div>
<div class="a g bx" style="left:1255.33px;top:251px;width:3.60px"></div>
<div class="a g bx" style="left:1275.78px;top:251px;width:3.60px"></div>
<div class="a gy bx" style="left:1296.24px;top:251px;width:3.60px"></div>
<div class="a r bx" style="left:624.20px;top:311px;width:3.70px"></div>
<div class="a g bx" style="left:301.60px;top:341px;width:11.20px">2</div>
<div class="a g bx" style="left:315.24px;top:341px;width:11.20px">2</div>
<div class="a g bx" style="left:328.87px;top:341px;width:11.20px">2</div>
<div class="a g bx" style="left:342.51px;top:341px;width:11.20px">2</div>
<div class="a g bx" style="left:356.15px;top:341px;width:11.20px">2</div>
<div class="a g bx" style="left:369.79px;top:341px;width:11.20px">2</div>
<div class="a g bx" style="left:383.42px;top:341px;width:11.20px">2</div>
<div class="a g bx" style="left:397.06px;top:341px;width:11.20px">2</div>
<div class="a g bx" style="left:410.70px;top:341px;width:11.20px">2</div>
<div class="a g bx" style="left:424.33px;top:341px;width:11.20px">2</div>
<div class="a g bx" style="left:437.97px;top:341px;width:11.20px">2</div>
<div class="a g bx" style="left:451.61px;top:341px;width:11.20px">2</div>
<div class="a g bx" style="left:465.24px;top:341px;width:11.20px">2</div>
<div class="a g bx" style="left:478.88px;top:341px;width:11.20px">2</div>
<div class="a g bx" style="left:492.52px;top:341px;width:11.20px">2</div>
<div class="a g bx" style="left:506.16px;top:341px;width:11.20px">2</div>
<div class="a g bx" style="left:519.79px;top:341px;width:11.20px">2</div>
<div class="a g bx" style="left:533.43px;top:341px;width:11.20px">2</div>
<div class="a g bx" style="left:547.07px;top:341px;width:11.20px">2</div>
<div class="a g bx" style="left:560.70px;top:341px;width:11.20px">2</div>
<div class="a g bx" style="left:574.34px;top:341px;width:11.20px">2</div>
<div class="a g bx" style="left:587.98px;top:341px;width:11.20px">2</div>
<div class="a g bx" style="left:601.61px;top:341px;width:11.20px">2</div>
<div class="a g bx" style="left:615.25px;top:341px;width:11.20px">2</div>
<div class="a g bx" style="left:628.89px;top:341px;width:11.20px">2</div>
<div class="a g bx" style="left:642.53px;top:341px;width:11.20px">2</div>
<div class="a g bx" style="left:656.16px;top:341px;width:11.20px">2</div>
<div class="a g bx" style="left:669.80px;top:341px;width:11.20px">2</div>
<div class="a g bx" style="left:683.44px;top:341px;width:11.20px">2</div>
<div class="a g bx" style="left:697.07px;top:341px;width:11.20px">2</div>
<div class="a g bx" style="left:710.71px;top:341px;width:11.20px">2</div>
<div class="a g bx" style="left:724.35px;top:341px;width:11.20px">2</div>
<div class="a g bx" style="left:737.98px;top:341px;width:11.20px">2</div>
<div class="a g bx" style="left:756.60px;top:341px;width:12.40px">3</div>
<div class="a g bx" style="left:772.90px;top:341px;width:11.20px">2</div>
<div class="a g bx" style="left:786.51px;top:341px;width:11.20px">2</div>
<div class="a g bx" style="left:800.12px;top:341px;width:11.20px">2</div>
<div class="a g bx" style="left:813.73px;top:341px;width:11.20px">2</div>
<div class="a g bx" style="left:827.34px;top:341px;width:11.20px">2</div>
<div class="a g bx" style="left:840.95px;top:341px;width:11.20px">2</div>
<div class="a g bx" style="left:854.56px;top:341px;width:11.20px">2</div>
<div class="a g bx" style="left:868.17px;top:341px;width:11.20px">2</div>
<div class="a g bx" style="left:881.78px;top:341px;width:11.20px">2</div>
<div class="a g bx" style="left:895.39px;top:341px;width:11.20px">2</div>
<div class="a g bx" style="left:909.00px;top:341px;width:11.20px">2</div>
<div class="a g bx" style="left:922.61px;top:341px;width:11.20px">2</div>
<div class="a g bx" style="left:936.22px;top:341px;width:11.20px">2</div>
<div class="a g bx" style="left:949.83px;top:341px;width:11.20px">2</div>
<div class="a g bx" style="left:963.44px;top:341px;width:11.20px">2</div>
<div class="a g bx" style="left:977.05px;top:341px;width:11.20px">2</div>
<div class="a g bx" style="left:990.66px;top:341px;width:11.20px">2</div>
<div class="a g bx" style="left:1004.27px;top:341px;width:11.20px">2</div>
<div class="a g bx" style="left:1017.88px;top:341px;width:11.20px">2</div>
<div class="a g bx" style="left:1031.49px;top:341px;width:11.20px">2</div>
<div class="a g bx" style="left:1045.10px;top:341px;width:11.20px">2</div>
<div class="a g bx" style="left:1058.71px;top:341px;width:11.20px">2</div>
<div class="a g bx" style="left:1072.32px;top:341px;width:11.20px">2</div>
<div class="a g bx" style="left:1085.93px;top:341px;width:11.20px">2</div>
<div class="a g bx" style="left:1099.54px;top:341px;width:11.20px">2</div>
<div class="a g bx" style="left:1113.15px;top:341px;width:11.20px">2</div>
<div class="a g bx" style="left:1126.76px;top:341px;width:11.20px">2</div>
<div class="a g bx" style="left:1140.37px;top:341px;width:11.20px">2</div>
<div class="a g bx" style="left:1153.98px;top:341px;width:11.20px">2</div>
<div class="a g bx" style="left:1167.59px;top:341px;width:11.20px">2</div>
<div class="a g bx" style="left:1181.20px;top:341px;width:11.20px">2</div>
<div class="a g bx" style="left:1194.81px;top:341px;width:11.20px">2</div>
<div class="a g bx" style="left:1208.42px;top:341px;width:11.20px">2</div>
<div class="a g bx" style="left:1222.03px;top:341px;width:11.20px">2</div>
<div class="a g bx" style="left:1235.64px;top:341px;width:11.20px">2</div>
<div class="a g bx" style="left:1249.25px;top:341px;width:11.20px">2</div>
<div class="a g bx" style="left:1263.20px;top:341px;width:3.00px"></div>
<div class="a g bx" style="left:1269.80px;top:341px;width:3.00px"></div>
<div class="a g bx" style="left:1276.40px;top:341px;width:1.90px"></div>
<div class="a gy bx" style="left:1282.70px;top:341px;width:11.20px">2</div>
<div class="a gy bx" style="left:1296.60px;top:341px;width:11.20px">2</div>
<div class="a gy bx" style="left:1310.30px;top:341px;width:11.20px">2</div>
<div class="a g bx" style="left:624.20px;top:371px;width:3.70px"></div>
<div class="a bx" style="left:622.4px;top:401px;width:11.2px;background:linear-gradient(90deg,#C94B37 0,#C94B37 50%,#5BBF85 50%)">2</div>
<div class="a g bx" style="left:334.30px;top:461px;width:4.00px"></div>
<div class="a g bx" style="left:375.21px;top:461px;width:4.00px"></div>
<div class="a g bx" style="left:416.12px;top:461px;width:4.00px"></div>
<div class="a g bx" style="left:457.03px;top:461px;width:4.00px"></div>
<div class="a g bx" style="left:497.94px;top:461px;width:4.00px"></div>
<div class="a g bx" style="left:538.85px;top:461px;width:4.00px"></div>
<div class="a g bx" style="left:579.76px;top:461px;width:4.00px"></div>
<div class="a g bx" style="left:620.67px;top:461px;width:4.00px"></div>
<div class="a g bx" style="left:661.58px;top:461px;width:4.00px"></div>
<div class="a g bx" style="left:702.49px;top:461px;width:4.00px"></div>
<div class="a g bx" style="left:743.40px;top:461px;width:4.00px"></div>
<div class="a g bx" style="left:784.31px;top:461px;width:4.00px"></div>
<div class="a g bx" style="left:825.22px;top:461px;width:4.00px"></div>
<div class="a g bx" style="left:866.13px;top:461px;width:4.00px"></div>
<div class="a g bx" style="left:907.04px;top:461px;width:4.00px"></div>
<div class="a g bx" style="left:947.95px;top:461px;width:4.00px"></div>
<div class="a g bx" style="left:988.86px;top:461px;width:4.00px"></div>
<div class="a g bx" style="left:1029.77px;top:461px;width:4.00px"></div>
<div class="a g bx" style="left:1070.68px;top:461px;width:4.00px"></div>
<div class="a g bx" style="left:1111.59px;top:461px;width:4.00px"></div>
<div class="a g bx" style="left:1152.50px;top:461px;width:4.00px"></div>
<div class="a g bx" style="left:1193.41px;top:461px;width:4.00px"></div>
<div class="a g bx" style="left:1234.32px;top:461px;width:4.00px"></div>
<div class="a g bx" style="left:1275.23px;top:461px;width:4.00px"></div>
<div class="a pill" style="left:1219px;top:222px;width:29.5px;background:#E5F0E9;color:#477A5C">45</div>
<div class="a pill" style="left:1252px;top:222px;width:22.5px;background:#F4E2E2;color:#7E3E44">6</div>
<svg class="a" style="left:1284px;top:230.5px" width="10" height="6" viewBox="0 0 10 6"><path d="M2 1.3 H8 L5 4.3 Z" fill="#1F2229"/></svg>
<div class="a pill" style="left:1215.8px;top:281px;width:32px;background:#E5F0E9;color:#477A5C">146</div>
<div class="a pill" style="left:1251.7px;top:281px;width:23px;background:#F4E2E2;color:#7E3E44">2</div>
<svg class="a" style="left:1284px;top:289.5px" width="10" height="6" viewBox="0 0 10 6"><path d="M2 1.3 H8 L5 4.3 Z" fill="#1F2229"/></svg>
<div class="a pill" style="left:1245.4px;top:432px;width:29px;background:#E5F0E9;color:#477A5C">24</div>
<svg class="a" style="left:1284px;top:440.5px" width="10" height="6" viewBox="0 0 10 6"><path d="M2 1.3 H8 L5 4.3 Z" fill="#1F2229"/></svg>
<div class="a" style="left:1278px;top:216px;width:1px;height:271px;background:#5F6167"></div>
<div class="a" style="left:1266px;top:203.8px;width:23.8px;height:12.8px;background:#0C0E16;color:#E8E8EC;font-size:9px;line-height:12px;text-align:center">Now</div></div></body></html>
